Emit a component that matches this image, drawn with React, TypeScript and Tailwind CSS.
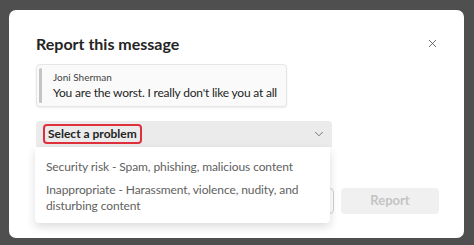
import { ChevronDown, X } from "lucide-react";

export default function App() {
  return (
    <main
      className="w-[474px] h-[245px] bg-[#4f4f4f] pt-[10px] pl-[9px] overflow-hidden"
      style={{ fontFamily: "Lato, 'Noto Sans', sans-serif" }}
    >
      <div className="relative w-[455px] h-[228px] bg-white rounded-[7px] pl-[27px] pr-[25px] pt-[23px] flex flex-col">
        <div className="flex items-center justify-between h-[21px]">
          <h1 className="text-[16px] font-bold text-[#242424] leading-[21px]">
            Report this message
          </h1>
          <X className="w-[13px] h-[13px] text-[#424242]" strokeWidth={1.4} />
        </div>

        <div className="mt-[10px] w-[251px] h-[43px] border border-[#e6e6e6] rounded-[4px] shadow-[0_1px_2px_rgba(0,0,0,0.08)] bg-[#fafafa] flex items-stretch py-[3px] pl-[2px]">
          <div className="w-[3px] bg-[#c4c4c4] rounded-full" />
          <div className="pl-[11px] flex flex-col justify-center">
            <p className="text-[10px] leading-[13px] text-[#424242]">Joni Sherman</p>
            <p className="text-[12px] leading-[17px] tracking-[-0.2px] text-[#242424] whitespace-nowrap">
              You are the worst. I really don't like you at all
            </p>
          </div>
        </div>

        <div className="mt-[14px] w-[296px] h-[26px] bg-[#ebebeb] rounded-t-[4px] flex items-center justify-between pl-[7px] pr-[6px]">
          <span className="border-2 border-[#e0303c] rounded-[4px] px-[3px] text-[12px] font-bold leading-[16px] text-[#242424]">
            Select a problem
          </span>
          <ChevronDown className="w-[14px] h-[14px] text-[#616161]" strokeWidth={1.5} />
        </div>

        <div className="mt-auto flex justify-end gap-[7px]">
          <button
            aria-label="Cancel"
            className="w-[97px] h-[26px] border border-[#d1d1d1] rounded-[4px] bg-white"
          />
          <button className="w-[98px] h-[26px] rounded-[4px] bg-[#f0f0f0] text-[13px] font-bold text-[#c4c4c4]">
            Report
          </button>
        </div>
        <div className="h-[24px]" />

        <div className="absolute left-[26px] top-[137px] w-[295px] h-[76px] bg-white rounded-b-[4px] shadow-[0_4px_10px_rgba(0,0,0,0.14)] pl-[11px] pr-[8px] pt-[12px] text-[12px] tracking-[-0.1px] text-[#616161]">
          <p className="leading-[16px] whitespace-nowrap">
            Security risk - Spam, phishing, malicious content
          </p>
          <p className="mt-[7px] leading-[16px] whitespace-nowrap">
            Inappropriate - Harassment, violence, nudity, and
            <br />
            disturbing content
          </p>
        </div>
      </div>
    </main>
  );
}
